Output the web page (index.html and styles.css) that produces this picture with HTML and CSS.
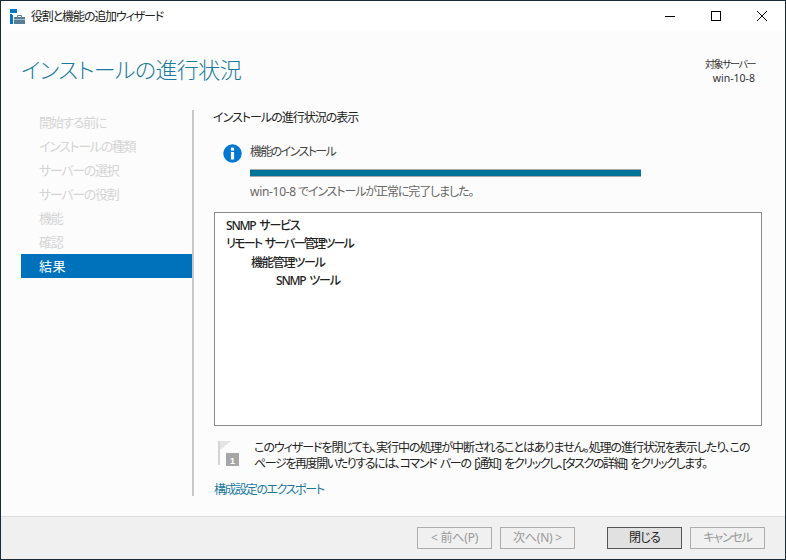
FILE: index.html
```html
<!DOCTYPE html>
<html lang="ja">
<head>
<meta charset="utf-8">
<title>役割と機能の追加ウィザード</title>
<link rel="stylesheet" href="styles.css">
</head>
<body>
<div class="window">
  <header class="titlebar">
    <svg class="app-icon" width="15" height="15" viewBox="0 0 15 15"><rect x="0" y="0" width="7" height="4" fill="#0078c8"/><rect x="0" y="5" width="2" height="1" fill="#0078c8"/><rect x="0" y="6" width="3" height="9" fill="#0078c8"/><rect x="4" y="8" width="11" height="7" fill="#5a7d96"/><path d="M7.5 8V6.5H11.5V8" fill="none" stroke="#5a7d96"/><rect x="4" y="10" width="11" height="1" fill="#a9bcc9"/></svg>
    <span class="title">役割と機能の追加ウィザード</span>
    <div class="controls">
      <svg width="12" height="12" viewBox="0 0 12 12"><path d="M1 6.5H11" stroke="#000" fill="none"/></svg>
      <svg width="12" height="12" viewBox="0 0 12 12"><rect x="1.5" y="1.5" width="9" height="9" stroke="#000" fill="none"/></svg>
      <svg width="12" height="12" viewBox="0 0 12 12"><path d="M1 1L11 11M11 1L1 11" stroke="#000" fill="none"/></svg>
    </div>
  </header>
  <div class="body">
    <div class="heading">
      <h1>インストールの進行状況</h1>
      <div class="target"><div>対象サーバー</div><div class="target-host">win-10-8</div></div>
    </div>
    <div class="main">
      <nav class="steps">
        <div class="step">開始する前に</div>
        <div class="step">インストールの種類</div>
        <div class="step">サーバーの選択</div>
        <div class="step">サーバーの役割</div>
        <div class="step">機能</div>
        <div class="step">確認</div>
        <div class="step active">結果</div>
      </nav>
      <section class="content">
        <div class="section-title">インストールの進行状況の表示</div>
        <div class="progress-block">
          <svg class="info" width="19" height="19" viewBox="0 0 19 19"><circle cx="9.5" cy="9.5" r="9.2" fill="#0078d0"/><rect x="7.9" y="3.6" width="3.2" height="3" fill="#fff"/><rect x="7.9" y="8" width="3.2" height="7.5" fill="#fff"/></svg>
          <div class="progress-col">
            <div class="progress-label">機能のインストール</div>
            <div class="bar"></div>
            <div class="status"><span class="status-host">win-10-8</span> でインストールが正常に完了しました。</div>
          </div>
        </div>
        <div class="results">
          <div class="r0">SNMP サービス</div>
          <div class="r0 long">リモート サーバー管理ツール</div>
          <div class="r1">機能管理ツール</div>
          <div class="r2">SNMP ツール</div>
        </div>
        <div class="note">
          <svg class="flag" width="21" height="25" viewBox="0 0 21 25"><rect x="0" y="0" width="2" height="24" fill="#d4d4d4"/><path d="M2 0L13 0L2 9Z" fill="#e4e4e4"/><rect x="8" y="12" width="13" height="13" fill="#a6a6a6"/><text x="14.5" y="22.5" text-anchor="middle" class="flag-num">1</text></svg>
          <p>このウィザードを閉じても、実行中の処理が中断されることはありません。処理の進行状況を表示したり、この<br><span class="line2">ページを再度開いたりするには、コマンド バーの [通知] をクリックし、[タスクの詳細] をクリックします。</span></p>
        </div>
        <a class="export">構成設定のエクスポート</a>
      </section>
    </div>
  </div>
  <footer class="footer">
    <button class="btn" disabled>&lt; 前へ(P)</button>
    <button class="btn next" disabled>次へ(N) &gt;</button>
    <button class="btn primary">閉じる</button>
    <button class="btn cancel" disabled>キャンセル</button>
  </footer>
</div>
</body>
</html>
```
FILE: styles.css
```css
* { box-sizing: border-box; }
html, body { margin: 0; padding: 0; }
body { width: 786px; height: 560px; overflow: hidden; font-family: "Noto Sans", "Noto Sans CJK JP", sans-serif; font-size: 12px; color: #222; background: #1a2a36; font-feature-settings: "palt"; }
.window { width: 784px; height: 558px; margin: 1px 0 0 1px; display: flex; flex-direction: column; background: #fff; }
.titlebar { height: 30px; display: flex; align-items: center; padding-left: 9px; background: #fff; flex: none; }
.app-icon { flex: none; }
.title { margin-left: 6px; font-size: 12px; color: #222; letter-spacing: -1.15px; }
.controls { margin-left: auto; display: flex; gap: 34px; padding-right: 17px; align-items: center; }
.body { flex: 1; display: flex; flex-direction: column; background: #fcfcfc; min-height: 0; }
.heading { height: 79px; padding: 21px 30px 0 20px; display: flex; justify-content: space-between; flex: none; }
h1 { margin: 0; font-size: 22px; line-height: 34px; font-weight: 300; color: #1a7a9e; letter-spacing: -0.6px; }
.target { text-align: right; font-size: 10px; line-height: 14px; color: #333; margin-top: 5px; letter-spacing: -1.4px; }
.target-host { letter-spacing: 0; font-size: 10.5px; }
.main { flex: 1; display: flex; min-height: 0; }
.steps { width: 171px; margin-left: 20px; flex: none; }
.step { height: 24px; line-height: 25px; padding-left: 18px; font-size: 13px; color: #d4d4d4; width: 171px; letter-spacing: -1.3px; }
.step.active { background: #0072bc; color: #fff; line-height: 24px; letter-spacing: 0.6px; }
.content { flex: 1; border-left: 2px solid #c8c8c8; margin-bottom: 20px; padding-left: 19px; padding-right: 24px; display: flex; flex-direction: column; }
.section-title { font-size: 12px; line-height: 16px; color: #222; letter-spacing: -1px; }
.progress-block { display: flex; margin-top: 17px; padding-left: 10px; }
.info { flex: none; margin-top: 1px; }
.progress-col { margin-left: 8px; }
.progress-label { font-size: 12px; line-height: 18px; color: #444; letter-spacing: -1.6px; }
.bar { width: 391px; height: 8px; margin-top: 8px; background: #00759a; border: solid #a8a8a8; border-width: 1px 0; }
.status { margin-top: 7px; font-size: 12px; line-height: 16px; color: #666; letter-spacing: -1.1px; }
.status-host { letter-spacing: -0.3px; }
.results { margin: 12px 0 0 1px; width: 548px; height: 214px; border: 1px solid #8a8a8a; background: #fff; padding: 4px 11px 0; font-weight: 500; font-size: 12px; line-height: 18.4px; color: #222; flex: none; letter-spacing: -1.2px; word-spacing: 2px; }
.long { letter-spacing: -1.75px; }
.r1 { padding-left: 25px; }
.r2 { padding-left: 50px; }
.note { display: flex; margin-top: 13px; }
.flag { flex: none; margin: 2px 0 0 5px; }
.flag-num { font-size: 9px; font-weight: 700; fill: #fff; font-family: "Liberation Sans", sans-serif; }
.note p { margin: 0 0 0 15px; padding-top: 1px; font-size: 12px; line-height: 16px; color: #222; white-space: nowrap; letter-spacing: -1.06px; word-spacing: 2px; }
.line2 { letter-spacing: -1.4px; }
.export { margin: 10px 0 0 1px; font-size: 12px; line-height: 16px; color: #1a7a9e; letter-spacing: -1.4px; }
.footer { height: 43px; flex: none; display: flex; align-items: flex-start; background: #f0f0f0; border-top: 1px solid #dcdcdc; padding: 10px 0 0 416px; }
.btn { width: 75px; height: 22px; padding: 0; font-family: inherit; font-feature-settings: inherit; letter-spacing: -0.2px; font-size: 12px; line-height: 18px; background: #f0f0f0; border: 1px solid #adadad; color: #999; }
.next { margin-left: 8px; }
.primary { margin-left: 32px; background: #e1e1e1; border-color: #555; color: #222; letter-spacing: -0.8px; }
.cancel { margin-left: 8px; letter-spacing: -1.2px; }
```
